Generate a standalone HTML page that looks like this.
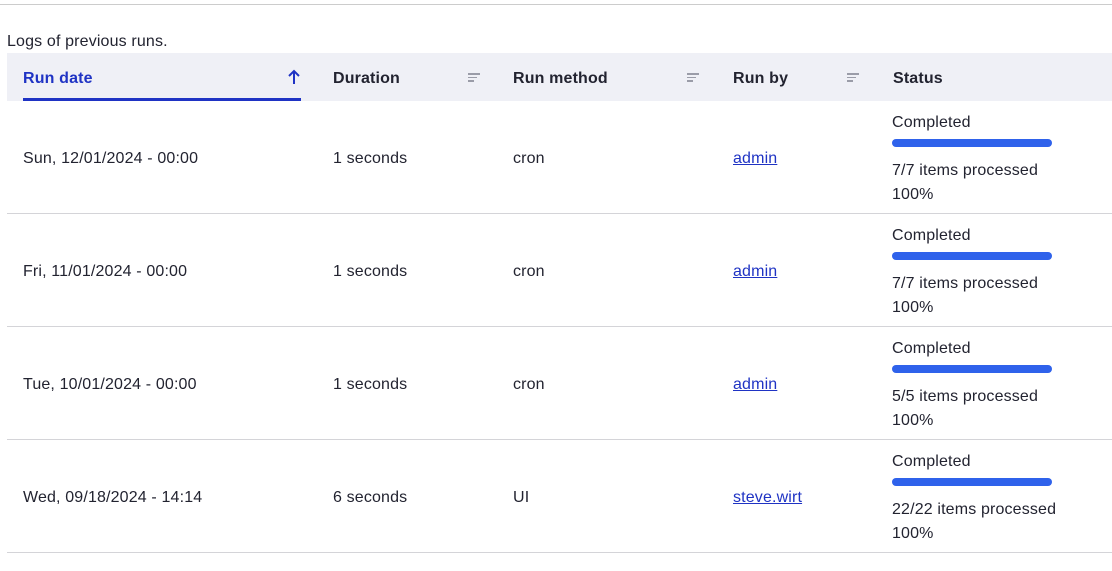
<!DOCTYPE html>
<html><head><meta charset="utf-8"><style>
body{margin:0;width:1112px;height:571px;background:#fff;font-family:"Liberation Sans",Arial,sans-serif;color:#222330;position:relative;overflow:hidden}
.a{position:absolute;font-size:16px;line-height:24px;white-space:nowrap;letter-spacing:0.15px;margin-top:2px}
.h{font-weight:bold}
.l{position:absolute;left:7px;width:1105px;height:1px;background:#d4d4d8}
.bar{position:absolute;left:892px;width:160px;height:8px;border-radius:4px;background:#2f62eb}
a{color:#1f33c4;text-decoration:underline}
.si{position:absolute;width:12px;height:9px}
.si i{display:block;height:1.5px;background:#9a9ca8;margin-bottom:2px}
</style></head><body>
<div style="position:absolute;left:0;top:4px;width:1112px;height:1px;background:#ccc"></div>
<div class="a" style="left:7px;top:28px;font-size:16px">Logs of previous runs.</div>
<div style="position:absolute;left:7px;top:53px;width:1105px;height:48px;background:#eff0f6"></div>
<div style="position:absolute;left:23px;top:98px;width:278px;height:3px;background:#1f33c4"></div>
<div class="a h" style="left:23px;top:65px;color:#1f33c4">Run date</div>
<svg style="position:absolute;left:287px;top:69px" width="14" height="16" viewBox="0 0 14 16"><path d="M7 15V2M2 7l5-5 5 5" stroke="#1f33c4" stroke-width="2" fill="none"/></svg>
<div class="a h" style="left:333px;top:65px">Duration</div>
<div class="si" style="left:468px;top:73px"><i style="width:12px"></i><i style="width:9px"></i><i style="width:6px"></i></div>
<div class="a h" style="left:513px;top:65px">Run method</div>
<div class="si" style="left:687px;top:73px"><i style="width:12px"></i><i style="width:9px"></i><i style="width:6px"></i></div>
<div class="a h" style="left:733px;top:65px">Run by</div>
<div class="si" style="left:847px;top:73px"><i style="width:12px"></i><i style="width:9px"></i><i style="width:6px"></i></div>
<div class="a h" style="left:893px;top:65px">Status</div>

<div class="a" style="left:23px;top:145px">Sun, 12/01/2024 - 00:00</div>
<div class="a" style="left:333px;top:145px">1 seconds</div>
<div class="a" style="left:513px;top:145px">cron</div>
<div class="a" style="left:733px;top:145px"><a>admin</a></div>
<div class="a" style="left:892px;top:109px">Completed</div>
<div class="bar" style="top:139px"></div>
<div class="a" style="left:892px;top:157px">7/7 items processed</div>
<div class="a" style="left:892px;top:181px">100%</div>
<div class="l" style="top:213px"></div>

<div class="a" style="left:23px;top:258px">Fri, 11/01/2024 - 00:00</div>
<div class="a" style="left:333px;top:258px">1 seconds</div>
<div class="a" style="left:513px;top:258px">cron</div>
<div class="a" style="left:733px;top:258px"><a>admin</a></div>
<div class="a" style="left:892px;top:222px">Completed</div>
<div class="bar" style="top:252px"></div>
<div class="a" style="left:892px;top:270px">7/7 items processed</div>
<div class="a" style="left:892px;top:294px">100%</div>
<div class="l" style="top:326px"></div>

<div class="a" style="left:23px;top:371px">Tue, 10/01/2024 - 00:00</div>
<div class="a" style="left:333px;top:371px">1 seconds</div>
<div class="a" style="left:513px;top:371px">cron</div>
<div class="a" style="left:733px;top:371px"><a>admin</a></div>
<div class="a" style="left:892px;top:335px">Completed</div>
<div class="bar" style="top:365px"></div>
<div class="a" style="left:892px;top:383px">5/5 items processed</div>
<div class="a" style="left:892px;top:407px">100%</div>
<div class="l" style="top:439px"></div>

<div class="a" style="left:23px;top:484px">Wed, 09/18/2024 - 14:14</div>
<div class="a" style="left:333px;top:484px">6 seconds</div>
<div class="a" style="left:513px;top:484px">UI</div>
<div class="a" style="left:733px;top:484px"><a>steve.wirt</a></div>
<div class="a" style="left:892px;top:448px">Completed</div>
<div class="bar" style="top:478px"></div>
<div class="a" style="left:892px;top:496px">22/22 items processed</div>
<div class="a" style="left:892px;top:520px">100%</div>
<div class="l" style="top:552px"></div>
</body></html>
